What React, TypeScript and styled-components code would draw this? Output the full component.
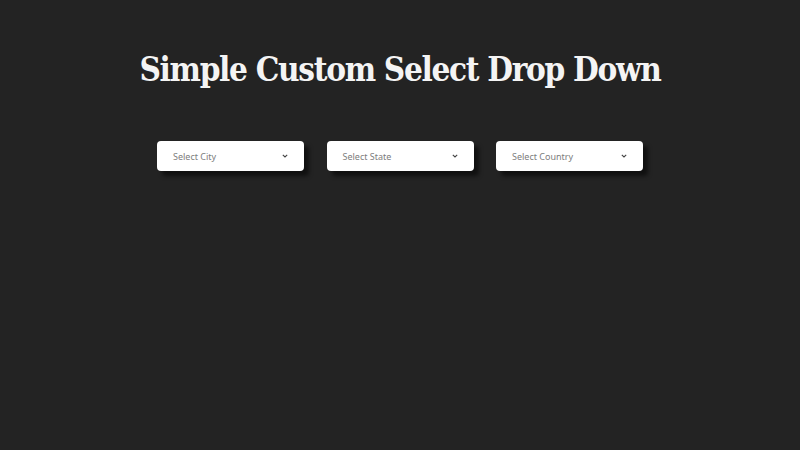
import styled, { createGlobalStyle } from 'styled-components';
import { FC } from 'react';

const GlobalStyle = createGlobalStyle`
  html, body {
    margin: 0;
    padding: 0;
    background: #232323;
    height: 100%;
  }
  #root {
    min-height: 100vh;
  }
`;

const Page = styled.div`
  display: flex;
  flex-direction: column;
  align-items: center;
  padding-top: 48px;
`;

const Heading = styled.h1`
  margin: 0;
  font-family: 'DejaVu Serif Condensed', 'DejaVu Serif', serif;
  font-stretch: condensed;
  font-weight: 700;
  font-size: 33px;
  letter-spacing: -1.3px;
  line-height: 44px;
  color: #f4f4f4;
`;

const SelectRow = styled.div`
  display: flex;
  gap: 22.5px;
  margin-top: 49px;
`;

const SelectBox = styled.div`
  width: 147px;
  height: 30px;
  box-sizing: border-box;
  display: flex;
  align-items: center;
  justify-content: space-between;
  padding: 0 15px 0 16px;
  background: #fff;
  border-radius: 4px;
  box-shadow: 5px 5px 4px rgba(0, 0, 0, 0.55);
  cursor: pointer;
`;

const Placeholder = styled.span`
  font-family: 'Noto Sans', sans-serif;
  font-size: 9px;
  color: #7d7d7d;
`;

const Chevron: FC = () => (
  <svg width="8" height="6" viewBox="0 0 8 6" fill="none">
    <path d="M1.8 1.8 L4 4 L6.2 1.8" stroke="#444" strokeWidth="1.1" />
  </svg>
);

const CustomSelect: FC<{ label: string }> = ({ label }) => (
  <SelectBox>
    <Placeholder>{label}</Placeholder>
    <Chevron />
  </SelectBox>
);

const App: FC = () => (
  <>
    <GlobalStyle />
    <Page>
      <Heading>Simple Custom Select Drop Down</Heading>
      <SelectRow>
        <CustomSelect label="Select City" />
        <CustomSelect label="Select State" />
        <CustomSelect label="Select Country" />
      </SelectRow>
    </Page>
  </>
);

export default App;
